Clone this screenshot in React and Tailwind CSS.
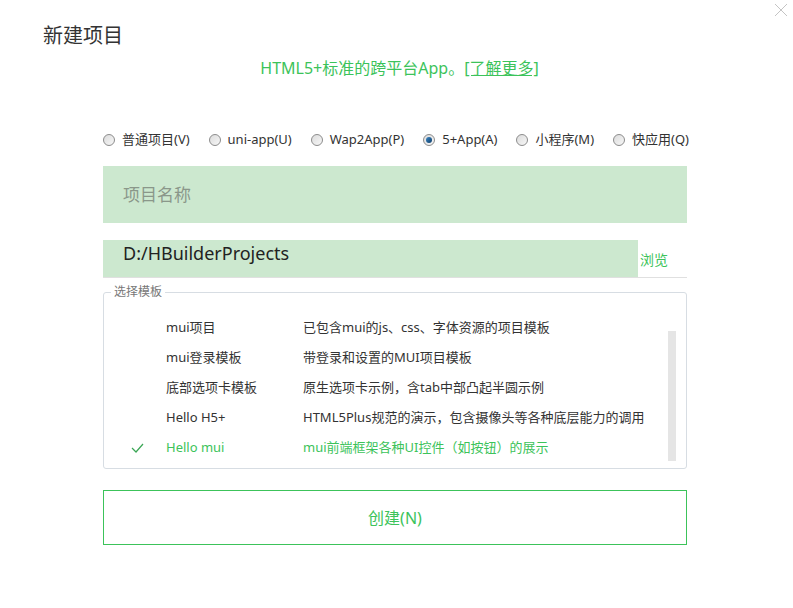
import React from 'react';

const font = { fontFamily: '"Noto Sans", "Noto Sans CJK SC", sans-serif' };

const types = [
  { label: '普通项目(V)' },
  { label: 'uni-app(U)' },
  { label: 'Wap2App(P)' },
  { label: '5+App(A)', checked: true },
  { label: '小程序(M)' },
  { label: '快应用(Q)' },
];

const templates = [
  { name: 'mui项目', desc: '已包含mui的js、css、字体资源的项目模板' },
  { name: 'mui登录模板', desc: '带登录和设置的MUI项目模板' },
  { name: '底部选项卡模板', desc: '原生选项卡示例，含tab中部凸起半圆示例' },
  { name: 'Hello H5+', desc: 'HTML5Plus规范的演示，包含摄像头等各种底层能力的调用' },
  { name: 'Hello mui', desc: 'mui前端框架各种UI控件（如按钮）的展示', active: true },
];

const Radio = ({ checked }) => (
  <span className="flex items-center justify-center w-[12px] h-[12px] rounded-full border border-[#8c8c8c] bg-gradient-to-br from-[#dcdcdc] to-[#f7f7f7]">
    {checked && <span className="w-[6px] h-[6px] rounded-full bg-gradient-to-br from-[#3b86c4] to-[#0f3f6b]" />}
  </span>
);

export default function App() {
  return (
    <div className="relative w-[793px] h-[608px] bg-white text-[#333]" style={font}>
      {/* close */}
      <svg className="absolute right-[5px] top-[3px]" width="14" height="14" viewBox="0 0 14 14">
        <path d="M1 1 L13 13 M13 1 L1 13" stroke="#c4c4c4" strokeWidth="1" fill="none" />
      </svg>

      <div className="pt-[22px] pl-[43px] text-[20px] leading-[28px] text-[#333]">新建项目</div>

      <div className="mt-[7px] text-center text-[16px] leading-[22px] text-[#3cc35a] pl-[6px]">
        HTML5+标准的跨平台App。<span className="underline">[了解更多]</span>
      </div>

      <div className="mx-[103px] w-[586px]">
        {/* project types */}
        <div className="mt-[51px] flex justify-between items-center h-[20px] text-[13px]">
          {types.map((t) => (
            <div key={t.label} className="flex items-center gap-[7px]">
              <Radio checked={t.checked} />
              <span className="text-[#333]">{t.label}</span>
            </div>
          ))}
        </div>

        {/* name */}
        <div className="mt-[16px] w-[584px] h-[57px] bg-[#cce8cf] flex items-center pl-[20px] text-[17px] text-[#8a978a]">
          项目名称
        </div>

        {/* path */}
        <div className="mt-[17px] w-[584px] flex border-b border-[#e0e0e0]">
          <div className="w-[535px] h-[37px] bg-[#cce8cf] pl-[20px] pt-[1px] text-[18px] leading-[24px] text-[#222]">
            D:/HBuilderProjects
          </div>
          <div className="pl-[2px] pt-[9px] text-[14px] text-[#3cc35a]">浏览</div>
        </div>

        {/* templates */}
        <div className="relative mt-[14px] w-[584px] h-[177px] border border-[#d7dde3] rounded-[3px] flex">
          <span className="absolute -top-[9px] left-[7px] bg-white px-[3px] text-[12px] leading-[16px] text-[#777]">
            选择模板
          </span>
          <div className="flex-1 pt-[20px]">
            {templates.map((t) => (
              <div
                key={t.name}
                className={`flex items-center h-[30px] text-[13px] ${t.active ? 'text-[#3cc35a]' : 'text-[#333]'}`}
              >
                <div className="w-[62px] pl-[27px]">
                  {t.active && (
                    <svg width="13" height="10" viewBox="0 0 13 10">
                      <path d="M1 5 L5 9 L12 1" stroke="#3aa655" strokeWidth="1.2" fill="none" />
                    </svg>
                  )}
                </div>
                <div className="w-[137px]">{t.name}</div>
                <div>{t.desc}</div>
              </div>
            ))}
          </div>
          <div className="w-[8px] h-[130px] mt-[38px] mr-[10px] bg-[#e5e5e5]" />
        </div>

        {/* create */}
        <button className="mt-[21px] w-[584px] h-[55px] border border-[#3cc35a] text-[16px] text-[#3cc35a] bg-white">
          创建(N)
        </button>
      </div>
    </div>
  );
}
